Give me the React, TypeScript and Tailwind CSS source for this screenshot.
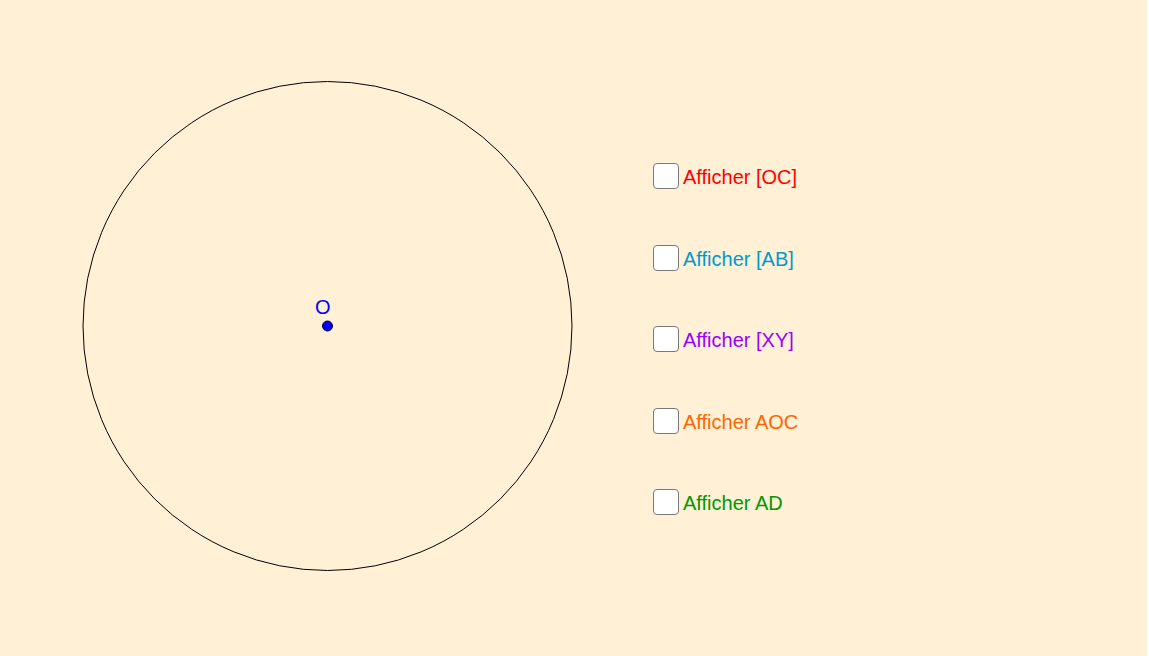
import React from "react";

const items: { label: string; color: string }[] = [
  { label: "Afficher [OC]", color: "text-[#ff0000]" },
  { label: "Afficher [AB]", color: "text-[#0099cc]" },
  { label: "Afficher [XY]", color: "text-[#9900ff]" },
  { label: "Afficher AOC", color: "text-[#ff6600]" },
  { label: "Afficher AD", color: "text-[#009900]" },
];

export default function App() {
  return (
    <div className="w-[1149px] h-[656px] bg-white overflow-hidden">
      <div className="relative w-[1147px] h-[656px] bg-[#fff0d6] font-['Liberation_Sans',Arial,sans-serif]">
        <svg className="absolute left-0 top-0" width="1147" height="656">
          <circle cx="327.5" cy="326" r="244.5" fill="none" stroke="#000" strokeWidth="1" />
          <circle cx="327.5" cy="326" r="5" fill="#0000ff" stroke="#000033" strokeWidth="1" />
        </svg>
        <span className="absolute left-[315px] top-[297px] text-[20px] leading-none text-[#0000ff]">O</span>
        <div className="absolute left-[653px] top-[163px] flex flex-col gap-[55.5px]">
          {items.map((it) => (
            <div key={it.label} className="flex items-center gap-[4px] h-[26px]">
              <div className="w-[26px] h-[26px] rounded-[4px] border-[1.5px] border-[#7a7a7a] bg-white" />
              <span className={`text-[20px] leading-none pt-[2px] ${it.color}`}>{it.label}</span>
            </div>
          ))}
        </div>
      </div>
    </div>
  );
}
